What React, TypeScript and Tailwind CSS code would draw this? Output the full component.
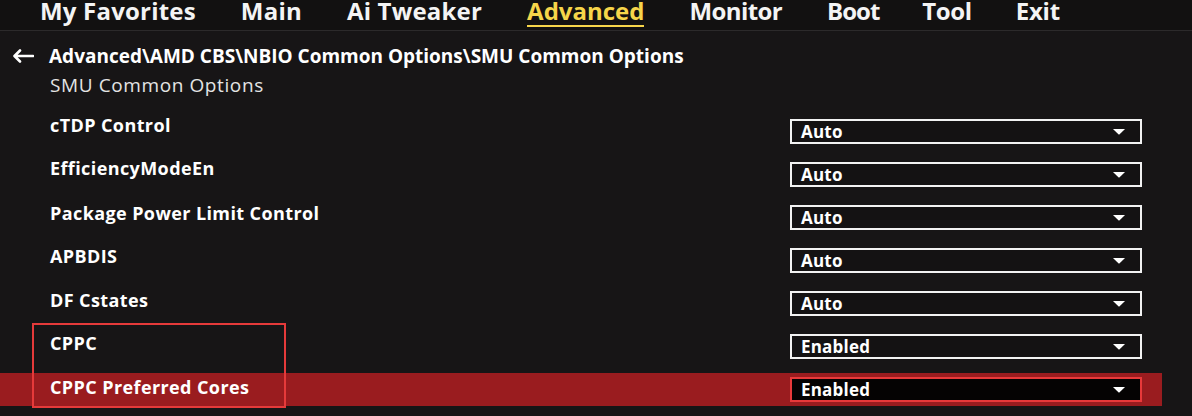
const FONT = '"Open Sans", "Noto Sans", sans-serif';

const tabs = [
  { name: 'My Favorites', cls: 'tracking-[0.2px]' },
  { name: 'Main', cls: 'tracking-[0.2px]' },
  { name: 'Ai Tweaker', cls: 'tracking-[0.2px]' },
  { name: 'Advanced', cls: 'tracking-[0px]' },
  { name: 'Monitor', cls: 'tracking-[-0.6px]' },
  { name: 'Boot', cls: 'tracking-[-1px]' },
  { name: 'Tool', cls: 'tracking-[-0.4px] -ml-[2px]' },
  { name: 'Exit', cls: 'tracking-[-0.2px] -ml-[1px]' },
];

// pb lifts labels a bit more near the top (photo perspective)
const items = [
  { label: 'cTDP Control', value: 'Auto', lift: 'pb-[14px]' },
  { label: 'EfficiencyModeEn', value: 'Auto', lift: 'pb-[13px]' },
  { label: 'Package Power Limit Control', value: 'Auto', lift: 'pb-[10px]' },
  { label: 'APBDIS', value: 'Auto', lift: 'pb-[10px]' },
  { label: 'DF Cstates', value: 'Auto', lift: 'pb-[8px]' },
  { label: 'CPPC', value: 'Enabled', lift: 'pb-[7px]' },
  { label: 'CPPC Preferred Cores', value: 'Enabled', lift: 'pb-[6px]', selected: true },
];

function Caret() {
  return (
    <svg width="14" height="7" viewBox="0 0 14 7" className="shrink-0">
      <path d="M1 1h12L7.6 6.2a.9.9 0 0 1-1.2 0z" fill="#ffffff" />
    </svg>
  );
}

function Dropdown({ value, selected }: { value: string; selected?: boolean }) {
  return (
    <div
      className={
        'flex items-center h-[25px] w-[352px] pl-[9px] pr-[14px] ' +
        (selected ? 'border-2 border-[#e8393a] bg-[#050303]' : 'border-2 border-[#f2f2f2] bg-[#141213]')
      }
    >
      <span className="flex-1 text-[17px] font-bold text-white leading-none tracking-[0.2px]">{value}</span>
      <Caret />
    </div>
  );
}

export default function App() {
  return (
    <div
      className="relative w-[1192px] h-[416px] overflow-hidden bg-[#171516] text-white"
      style={{ fontFamily: FONT }}
    >
      {/* Top menu */}
      <div className="h-[31px] bg-[#121111] border-b border-[#2c2a2b] flex items-start pl-[40px] gap-[45px]">
        {tabs.map((t) =>
          t.name === 'Advanced' ? (
            <div key={t.name} className="flex flex-col">
              <span className={'text-[24px] font-bold leading-[22px] text-[#f6d54a] ' + t.cls}>{t.name}</span>
              <span className="h-[2px] bg-[#f6d54a] mt-[3px]" />
            </div>
          ) : (
            <span key={t.name} className={'text-[24px] font-bold leading-[22px] text-[#f4f4f4] ' + t.cls}>
              {t.name}
            </span>
          )
        )}
      </div>

      {/* Breadcrumb */}
      <div className="flex items-center h-[28px] mt-[11px] pl-[12px]">
        <svg width="22" height="14" viewBox="0 0 22 14" className="mr-[15px]">
          <path d="M21 7H3M8 1.5 2.5 7 8 12.5" stroke="#ffffff" strokeWidth="2.6" fill="none" strokeLinecap="round" strokeLinejoin="round" />
        </svg>
        <span className="text-[19px] font-bold leading-[28px]">
          Advanced\AMD CBS\NBIO Common Options\SMU Common Options
        </span>
      </div>

      <div className="pl-[50px] mt-[4px] text-[19px] text-[#e4e4e4] leading-[22px] tracking-[0.6px]">SMU Common Options</div>

      {/* Rows */}
      <div className="flex flex-col mt-[14px]">
        {items.map((it) => (
          <div key={it.label} className="h-[43px] flex items-center">
            <div
              className={
                'h-[33px] w-[1162px] flex items-center ' + (it.selected ? 'bg-[#9a1c1f]' : '')
              }
            >
              <span className={'pl-[50px] text-[18px] font-bold leading-[22px] tracking-[0.4px] ' + it.lift}>{it.label}</span>
              <div className="ml-auto mr-[20px]">
                <Dropdown value={it.value} selected={it.selected} />
              </div>
            </div>
          </div>
        ))}
      </div>

      {/* annotation */}
      <div className="absolute left-[32px] top-[323px] w-[254px] h-[85px] border-2 border-[#e53a3a]" />
    </div>
  );
}
